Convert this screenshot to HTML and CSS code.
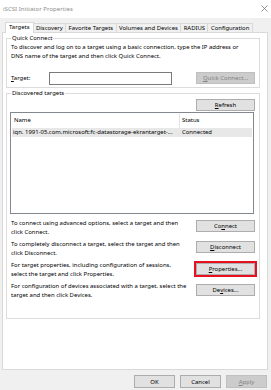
FILE: index.html
```html
<!DOCTYPE html>
<html>
<head>
<meta charset="utf-8">
<link rel="stylesheet" href="styles.css">
</head>
<body>
<div class="window">
  <div class="titlebar">
    <span class="title">iSCSI Initiator Properties</span>
    <svg class="close" width="7" height="7" viewBox="0 0 7 7"><path d="M0.5 0.5L6.5 6.5M6.5 0.5L0.5 6.5" stroke="#7a7a7a" stroke-width="0.8" fill="none"/></svg>
  </div>
  <div class="tabs">
    <div class="tab active">Targets</div>
    <div class="tab">Discovery</div>
    <div class="tab">Favorite Targets</div>
    <div class="tab">Volumes and Devices</div>
    <div class="tab">RADIUS</div>
    <div class="tab">Configuration</div>
  </div>
  <div class="panel">
    <fieldset class="group quick">
      <legend>Quick Connect</legend>
      <p class="desc">To discover and log on to a target using a basic connection, type the IP address or DNS name of the target and then click Quick Connect.</p>
      <div class="target-row">
        <span class="label"><u>T</u>arget:</span>
        <span class="textbox"></span>
        <span class="btn disabled"><u>Q</u>uick Connect...</span>
      </div>
    </fieldset>
    <fieldset class="group discovered">
      <legend>Discovered targets</legend>
      <div class="refresh-row"><span class="btn"><u>R</u>efresh</span></div>
      <div class="listview">
        <div class="lv-header">
          <div class="col-name">Name</div>
          <div class="col-status">Status</div>
        </div>
        <div class="lv-row">
          <div class="col-name">iqn. 1991-05.com.microsoft:fc-datastorage-ekrantarget-...</div>
          <div class="col-status">Connected</div>
        </div>
      </div>
      <div class="actions">
        <div class="action">
          <p class="desc">To connect using advanced options, select a target and then click Connect.</p>
          <span class="btn">Co<u>n</u>nect</span>
        </div>
        <div class="action">
          <p class="desc">To completely disconnect a target, select the target and then click Disconnect.</p>
          <span class="btn"><u>D</u>isconnect</span>
        </div>
        <div class="action">
          <p class="desc">For target properties, including configuration of sessions, select the target and click Properties.</p>
          <span class="btn highlighted"><u>P</u>roperties...</span>
        </div>
        <div class="action">
          <p class="desc">For configuration of devices associated with a target, select the target and then click Devices.</p>
          <span class="btn">De<u>v</u>ices...</span>
        </div>
      </div>
    </fieldset>
  </div>
  <div class="footer">
    <span class="btn">OK</span>
    <span class="btn">Cancel</span>
    <span class="btn disabled"><u>A</u>pply</span>
  </div>
</div>
</body>
</html>
```
FILE: styles.css
```css
* { box-sizing: border-box; }
html, body { margin: 0; padding: 0; }
body { width: 271px; height: 390px; overflow: hidden; }
.window {
  width: 271px;
  height: 390px;
  background: #f0f0f0;
  display: flex;
  flex-direction: column;
  font-family: "Noto Sans", "Open Sans", sans-serif;
  font-size: 5.95px;
  color: #000;
}
.titlebar {
  height: 18px;
  flex: none;
  background: #fff;
  display: flex;
  align-items: center;
  justify-content: space-between;
  padding: 0 3px 2px 3px;
}
.title { color: #8f8f8f; font-size: 6.1px; }
.tabs {
  height: 14px;
  flex: none;
  display: flex;
  align-items: flex-end;
  padding-left: 5px;
  position: relative;
  z-index: 1;
}
.tab {
  height: 9px;
  line-height: 8px;
  padding: 0 2.4px;
  border: 1px solid #d9d9d9;
  border-bottom: none;
  border-left: none;
  background: #f0f0f0;
  white-space: nowrap;
}
.tab.active {
  height: 11px;
  line-height: 8px;
  margin-bottom: -1px;
  background: #fff;
  border-left: 1px solid #d9d9d9;
  padding: 0 3px;
}
.panel {
  flex: none;
  height: 338px;
  margin: 0 3px 0 2px;
  background: #fff;
  border: 1px solid #d9d9d9;
  padding: 1px 7px 0 3px;
}
.group {
  margin: 0;
  border: 1px solid #dcdcdc;
  padding: 0 4px 1px 4px;
  min-width: 0;
}
.group legend {
  padding: 0 1px;
  line-height: 9px;
}
.desc {
  margin: 0;
  line-height: 9px;
}
.quick .desc { padding-right: 10px; }
.target-row {
  margin-top: 11px;
  display: flex;
  align-items: flex-start;
  height: 14px;
}
.label { width: 38px; line-height: 13px; }
.textbox {
  width: 123px;
  height: 13px;
  border: 1px solid #7a7a7a;
  background: #fff;
}
.btn {
  display: flex;
  align-items: center;
  justify-content: center;
  width: 59px;
  height: 12px;
  background: #e1e1e1;
  border: 1px solid #adadad;
  white-space: nowrap;
}
.btn.disabled {
  background: #cccccc;
  border-color: #bfbfbf;
  color: #838383;
}
.btn.highlighted {
  outline: 2px solid #e8101e;
  outline-offset: 0;
}
.target-row .btn { margin-left: auto; }
.discovered {
  margin-top: 1px;
  height: 230px;
}
.refresh-row {
  display: flex;
  justify-content: flex-end;
  margin-top: 1px;
}
.listview {
  height: 102px;
  margin: 1px 1px 0 -1px;
  border: 1px solid #828790;
  padding: 0 1px;
}
.lv-header {
  display: grid;
  grid-template-columns: 168px 1fr;
  height: 15px;
  line-height: 14px;
}
.lv-header .col-name { border-right: 1px solid #e5e5e5; padding-left: 2px; }
.lv-header .col-status { padding-left: 2px; }
.lv-row {
  display: grid;
  grid-template-columns: 169px 1fr;
  height: 9px;
  line-height: 9px;
  background: #e8e8e8;
}
.lv-row .col-name { white-space: nowrap; overflow: hidden; padding-left: 1px; }
.lv-row .col-status { padding-left: 1px; }
.actions {
  display: flex;
  flex-direction: column;
  gap: 3.3px;
  margin-top: 4.5px;
}
.action {
  display: grid;
  grid-template-columns: 1fr 59px;
  column-gap: 8px;
  height: 18px;
  align-items: start;
}
.action .btn { margin-top: 1.5px; }
.footer {
  flex: 1;
  display: flex;
  justify-content: flex-end;
  align-items: flex-start;
  gap: 5px;
  padding: 5px 4px 0 0;
}
.footer .btn { width: 41px; height: 13px; }
```
